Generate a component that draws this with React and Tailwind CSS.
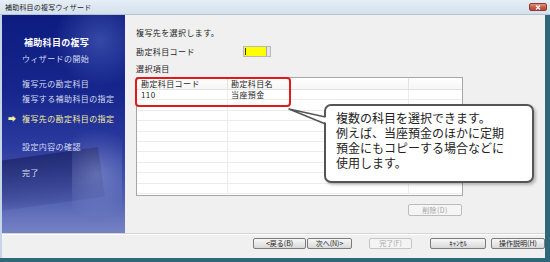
import React from "react";

const steps = [
  { label: "ウィザードの開始", mt: "mt-[5px]" },
  { label: "複写元の勘定科目", mt: "mt-[14px]" },
  { label: "複写する補助科目の指定", mt: "mt-[4px]" },
  { label: "複写先の勘定科目の指定", mt: "mt-[9px]", current: true },
  { label: "設定内容の確認", mt: "mt-[17px]" },
  { label: "完了", mt: "mt-[15px]" },
];

const footerButtons = [
  { label: "<戻る(B)", w: "w-[53px]", ml: "ml-0" },
  { label: "次へ(N)>", w: "w-[45px]", ml: "ml-[1px]" },
  { label: "完了(F)", w: "w-[43px]", ml: "ml-[17px]", disabled: true },
  { label: "ｷｬﾝｾﾙ", w: "w-[56px]", ml: "ml-[18px]" },
  { label: "操作説明(H)", w: "w-[54px]", ml: "ml-[5px]" },
];

const WizardButton = ({ label, w, ml, disabled }) => (
  <div
    className={`${w} ${ml} h-[11px] flex items-center justify-center rounded-[2px] border text-[7px] leading-none ${
      disabled
        ? "border-[#c4c4c4] bg-[#f4f4f4] text-[#a8a8a8]"
        : "border-[#7c7c7c] bg-[linear-gradient(180deg,#f8f8f8_0%,#e8e8e8_50%,#d8d8d8_100%)] text-[#222]"
    }`}
  >
    {label}
  </div>
);

const App = () => {
  const rows = Array.from({ length: 10 });

  return (
    <div className="w-[550px] h-[262px] flex flex-col overflow-hidden bg-[#2f6878] font-['Noto_Sans_CJK_JP',sans-serif]">
      {/* title bar */}
      <div className="h-[15px] shrink-0 flex items-center justify-between bg-[linear-gradient(180deg,#e6eef7_0%,#d4e0ec_100%)] border-b border-[#b4c4d4]">
        <span className="pl-[5px] text-[7px] leading-none text-[#1a1a1a] tracking-[0.2px]">補助科目の複写ウィザード</span>
        <div className="mr-[3px] w-[18px] h-[8px] rounded-[2px] border border-[#8c3b30] bg-[linear-gradient(180deg,#e49484_0%,#c95a45_55%,#b8483a_100%)] flex items-center justify-center">
          <svg width="6" height="5" viewBox="0 0 6 5">
            <path d="M1 0.5 L5 4.5 M5 0.5 L1 4.5" stroke="#fff" strokeWidth="1.3" />
          </svg>
        </div>
      </div>

      <div className="flex-1 flex flex-col bg-[#f0f0f0] border-l-2 border-[#c4d6e8] mr-[5px]">
        {/* body */}
        <div className="h-[218px] shrink-0 flex">
          {/* left panel */}
          <div className="relative w-[123px] shrink-0 overflow-hidden bg-[linear-gradient(180deg,#0e1c80_0%,#16268c_35%,#2b3a9e_60%,#4d5cb0_82%,#6876bd_100%)]">
            <div className="absolute -right-[30px] -top-[20px] w-[110px] h-[90px] rounded-full bg-[radial-gradient(circle,rgba(120,150,230,0.35)_0,transparent_65%)]" />
            <div className="absolute left-[-20px] top-[140px] w-[120px] h-[50px] rotate-[-8deg] bg-[linear-gradient(180deg,rgba(20,25,80,0.55),rgba(40,50,120,0.2))]" />
            <div className="absolute left-[70px] top-[100px] w-[50px] h-[118px] rounded-full bg-[radial-gradient(circle,rgba(190,200,240,0.35)_0,transparent_70%)]" />
            <div className="absolute left-[0px] top-[185px] w-[123px] h-[40px] bg-[linear-gradient(180deg,transparent,rgba(150,160,215,0.35))]" />

            <div className="relative pt-[21px] pl-[20px] text-[#d6daf0]">
              <div className="ml-[2px] h-[12px] flex items-center text-[9px] font-bold text-white tracking-[0.3px] leading-none">
                補助科目の複写
              </div>
              {steps.map((step) => (
                <div
                  key={step.label}
                  className={`${step.mt} relative h-[11px] flex items-center text-[8px] leading-none tracking-[0.4px] ${
                    step.current ? "text-[#f4f0a0]" : ""
                  }`}
                >
                  {step.current && (
                    <span className="absolute left-[-14px] text-[8px] leading-none">➡</span>
                  )}
                  {step.label}
                </div>
              ))}
            </div>
          </div>

          {/* right panel */}
          <div className="relative flex-1 pl-[11px] pt-[12px] text-[8px] leading-none text-[#1e1e1e] tracking-[0.4px]">
            <div className="h-[11px] flex items-center">複写先を選択します。</div>
            <div className="mt-[8px] h-[11px] flex items-center">
              <span className="w-[107px]">勘定科目コード</span>
              <div className="flex h-[11px] border border-[#b8b8b8]">
                <div className="w-[22px] h-full bg-[#ffff00] flex items-center pl-[1px]">
                  <div className="w-[1px] h-[7px] bg-[#333]" />
                </div>
                <div className="w-[4px] h-full bg-[#e4e4e4] border-l border-[#a8a8a8]" />
              </div>
            </div>
            <div className="mt-[6px] h-[11px] flex items-center">選択項目</div>

            {/* table */}
            <div className="mt-[3px] w-[327px] h-[119px] border border-[#a6a6a6] bg-white overflow-hidden">
              <div className="flex h-[12px] border-b border-[#e2e2e2] bg-[linear-gradient(180deg,#ffffff,#f6f6f6)]">
                <div className="w-[91px] pl-[4px] flex items-center border-r border-[#e2e2e2]">勘定科目コード</div>
                <div className="w-[181px] pl-[3px] flex items-center border-r border-[#e2e2e2]">勘定科目名</div>
                <div className="flex-1" />
              </div>
              {rows.map((_, i) => (
                <div key={i} className="flex h-[10.4px] border-b border-[#ececec]">
                  <div className="w-[91px] pl-[4px] flex items-center border-r border-[#ececec]">
                    {i === 0 ? "110" : ""}
                  </div>
                  <div className="w-[181px] pl-[3px] flex items-center border-r border-[#ececec]">
                    {i === 0 ? "当座預金" : ""}
                  </div>
                  <div className="flex-1" />
                </div>
              ))}
            </div>

            <div className="mt-[8px] w-[327px] flex justify-end pr-[1px]">
              <div className="w-[54px] h-[12px] flex items-center justify-center rounded-[2px] border border-[#bcbcbc] bg-[#f5f5f5] text-[7px] text-[#a4a4a4]">
                削除(D)
              </div>
            </div>

            {/* red highlight */}
            <div className="absolute left-[10px] top-[62px] w-[156px] h-[30px] rounded-[4px] border-2 border-[#e01a1a]" />

            {/* callout */}
            <div className="absolute left-[199px] top-[89px] w-[210px] h-[79px] rounded-[7px] border-2 border-[#555] bg-white shadow-[2px_2px_3px_rgba(0,0,0,0.25)] pl-[10px] pt-[4px] text-[12px] leading-[15px] tracking-normal text-[#222]">
              <div>複数の科目を選択できます。</div>
              <div>例えば、当座預金のほかに定期</div>
              <div>預金にもコピーする場合などに</div>
              <div>使用します。</div>
            </div>
            <svg className="absolute left-[160px] top-[88px]" width="46" height="26" viewBox="0 0 46 26">
              <polygon points="4,6 43,14.5 43,20.5" fill="#fff" />
              <polyline points="40.5,14 4,6 40.5,21" fill="none" stroke="#555" strokeWidth="1.6" strokeLinejoin="round" />
            </svg>
          </div>
        </div>

        {/* footer */}
        <div className="flex-1 border-t border-[#d4d4d4] shadow-[inset_0_1px_0_#ffffff] flex items-start justify-end pt-[4px] pr-[0px]">
          {footerButtons.map((b) => (
            <WizardButton key={b.label} {...b} />
          ))}
        </div>
      </div>
      <div className="h-[4px] shrink-0" />
    </div>
  );
};

export default App;
